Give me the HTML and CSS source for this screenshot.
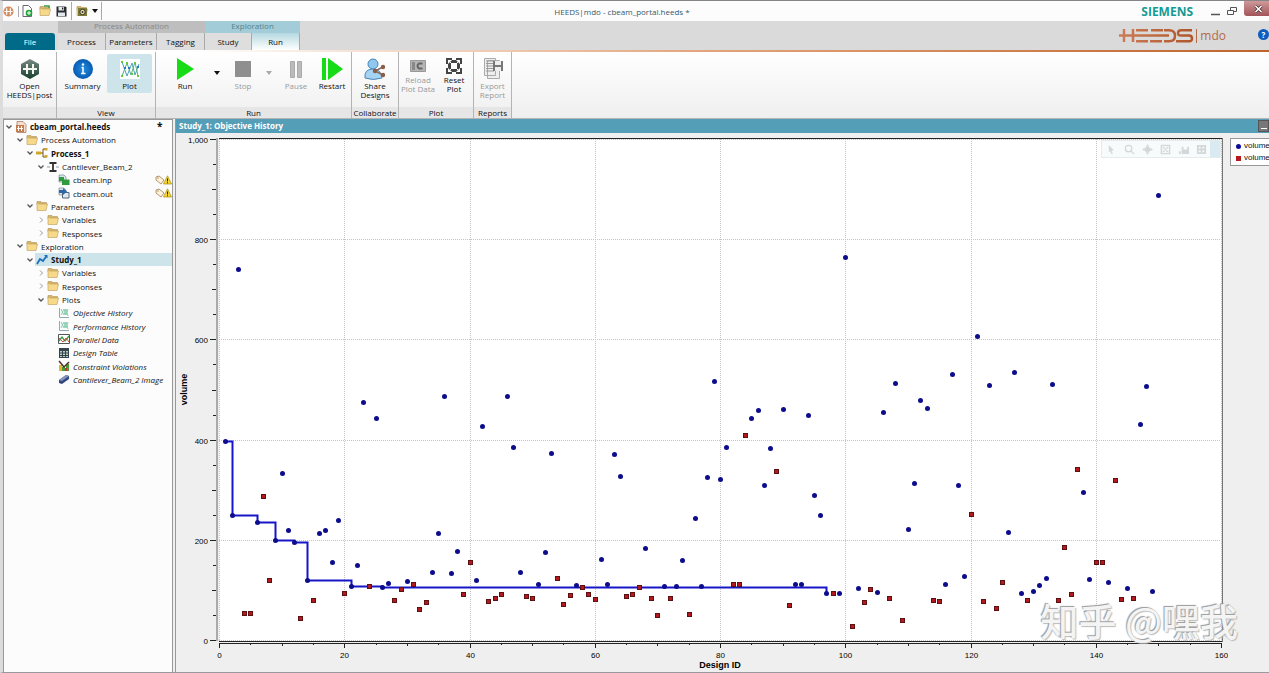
FILE: index.html
```
<!DOCTYPE html>
<html lang="en">
	<head>
		<meta charset="UTF-8">
		<title>HEEDS|mdo - cbeam_portal.heeds *</title>
		<meta name="viewport" content="width=device-width,initial-scale=1">
		<link rel="stylesheet" href="styles.css">
	</head>
	<body>
		<!-- shared icons -->
		<svg class="sprite" aria-hidden="true">
			<symbol id="i-open" viewBox="0 0 10 10"><path d="M2.500 3.500 5 6 7.500 3.500" fill="none" stroke="#555" stroke-width="1.300"/></symbol>
			<symbol id="i-closed" viewBox="0 0 10 10"><path d="M4 2.500 6.500 5 4 7.500" fill="none" stroke="#999" stroke-width="1"/></symbol>
			<symbol id="i-folder" viewBox="0 0 12 12"><path d="M1 1.500h4l1 1h4.500V5H1z" fill="#d7b468" stroke="#a98b4c" stroke-width=".5"/><path d="M1 10.500V2.500L3 4h8.500L10 10.500z" fill="#f7d98a" stroke="#b79a5a" stroke-width=".6"/></symbol>
			<symbol id="i-history" viewBox="0 0 12 12"><path d="M1.500 1v9.500H11" fill="none" stroke="#8fa9b5"/><path d="M3 2l3 6 2-6 2 7M3 8l3-6 2 6 2-6" fill="none" stroke="#6fc3a0" stroke-width=".8"/></symbol>
			<symbol id="i-tagwarn" viewBox="0 0 17 10"><path d="M1 2l3-1 5 4-3 4-5-4z" fill="#fff3de" stroke="#a07d4c" stroke-width=".8"/><circle cx="3" cy="3" r=".7" fill="#a07d4c"/><path d="M12.500.8 16.500 9h-8z" fill="#f8d92c" stroke="#a38a14" stroke-width=".7"/><path d="M12.500 3.500v3M12.500 7.300v1" stroke="#222"/></symbol>
			<symbol id="i-file" viewBox="0 0 12 12"><path d="M1 1h5l2 2v5H1z" fill="#d9e6ee" stroke="#678" stroke-width=".6"/></symbol>
		</svg>
		<div class="window">
			<header class="titlebar">
				<div class="quick">
					<span class="app-icon"><svg width="11" height="11" viewBox="0 0 12 12"><circle cx="6" cy="6" r="5.500" fill="#d58a5c"/><path d="M4 2.500v7M8 2.500v7M1.500 6h9" stroke="#fff" stroke-width="1.300"/></svg></span>
					<button class="tool" aria-label="New"><svg width="11" height="12" viewBox="0 0 11 12"><path d="M1 .5h5.500l3 3v8H1z" fill="#fff" stroke="#667"/><circle cx="7" cy="8" r="3.300" fill="#1fa33a"/><path d="M7 6v4M5 8h4" stroke="#fff"/></svg></button>
					<button class="tool" aria-label="Open"><svg width="12" height="12"><use href="#i-folder"/><path d="M5 1h5v2" fill="none" stroke="#3a9b3f" stroke-width="1.500"/></svg></button>
					<button class="tool" aria-label="Save"><svg width="11" height="11" viewBox="0 0 11 11"><path d="M.5.5h9l1 1v9H.5z" fill="#2b2b31"/><path d="M2.500 1h5.500v3.500H2.500zM2 6.500h7V10H2z" fill="#e3e8ee"/><path d="M6 1.500h1.300v2H6z" fill="#222"/></svg></button>
					<span class="sep"></span>
					<button class="tool" aria-label="Capture"><svg width="12" height="12"><use href="#i-folder"/><path d="M2 3h9v8H2z" fill="#7d7a35"/><circle cx="6.500" cy="7" r="2.700" fill="#f0e6a0" stroke="#333"/><circle cx="6.500" cy="7" r="1" fill="#333"/></svg></button>
					<button class="tool caret" aria-label="More"><svg width="6" height="4"><path d="M0 0h6L3 4z" fill="#111"/></svg></button>
					<span class="sep"></span>
				</div>
				<div class="caption">HEEDS|mdo - cbeam_portal.heeds *</div>
				<div class="win-right">
					<span class="siemens">SIEMENS</span>
					<button class="winbtn" aria-label="Minimize"><svg width="9" height="10"><path d="M0 8.500h9" stroke="#555" stroke-width="1.500"/></svg></button>
					<button class="winbtn" aria-label="Restore"><svg width="10" height="9"><path d="M3.500 3V.500h6v4H7M.5 3.500h6v4h-6z" fill="none" stroke="#555"/></svg></button>
					<button class="close" aria-label="Close"><svg width="9" height="8" viewBox="0 0 9 8"><path d="M1.500 1l6 6M7.500 1l-6 6" stroke="#433" stroke-width="3"/><path d="M1.500 1l6 6M7.500 1l-6 6" stroke="#fff" stroke-width="1.500"/></svg></button>
				</div>
			</header>

			<div class="tabstrip">
				<nav class="tabs">
					<span class="ctx ctx-process">Process Automation</span>
					<span class="ctx ctx-explore">Exploration</span>
					<button class="tab file">File</button>
					<button class="tab">Process</button>
					<button class="tab">Parameters</button>
					<button class="tab">Tagging</button>
					<button class="tab">Study</button>
					<button class="tab active">Run</button>
				</nav>
				<div class="brand">
					<svg class="heeds" width="75" height="16" viewBox="0 0 75 16" role="img" aria-label="HEEDS">
						<defs><linearGradient id="copper" gradientUnits="userSpaceOnUse" x1="0" x2="75"><stop offset="0" stop-color="#cc7d58"/><stop offset="1" stop-color="#b0552b"/></linearGradient></defs>
						<g fill="none" stroke="url(#copper)" stroke-width="2.500"><path d="M5 1v13M14 1v13M0 7.400 50 7.500M17 2.200h12M17 13.200h12M32 2.200h12M31 13.200h12M45 2.200h5q6 0 6 5.500t-6 5.500h-5M73 2.200H62q-3 0-3 2.800t3 2.500h8q3 0 3 3t-3 2.700H57"/></g>
					</svg>
					<span class="mdo">mdo</span>
					<button class="help" aria-label="Help">?</button>
				</div>
			</div>

			<div class="ribbon">
				<section class="group g-post">
					<div class="items">
						<button class="cmd"><svg width="20" height="22" viewBox="0 0 20 22"><defs><linearGradient id="hex" x2="0" y2="1"><stop offset="0" stop-color="#7b8b83"/><stop offset="1" stop-color="#173e2d"/></linearGradient></defs><path d="M10 1l9 5v10l-9 5-9-5V6z" fill="url(#hex)"/><path d="M7 6v10M13 6v10M3 11h14" stroke="#f4f7f5" stroke-width="2"/></svg>Open<br>HEEDS|post</button>
					</div>
					<h2></h2>
				</section>
				<section class="group g-view">
					<div class="items">
						<button class="cmd"><svg width="22" height="22" viewBox="0 0 22 22"><defs><radialGradient id="blue"><stop offset="0" stop-color="#238de0"/><stop offset="1" stop-color="#075bb2"/></radialGradient></defs><circle cx="11" cy="11" r="10" fill="url(#blue)"/><circle cx="11" cy="6.500" r="1.200" fill="#fff"/><path d="M9.500 9.500H11V15M9 15.500h4.500" fill="none" stroke="#fff" stroke-width="1.500"/></svg>Summary</button>
						<button class="cmd on"><svg width="22" height="22" viewBox="0 0 22 22"><path d="M1 1h20v20H1z" fill="#fff"/><path d="M3 4l5 14 5-13 3 12 4-11" fill="none" stroke="#4aa5b5"/><path d="M3 18 8 5l4 12 4-13 3 14" fill="none" stroke="#58ae82"/><path d="M2 3h2v2H2zM7 4h2v2H7zM15 4h2v2h-2zM2 17h2v2H2zM12 15h2v2h-2zM18 17h2v2h-2z" fill="#5dce35"/><path d="M5 9h2v2H5zM9 9h2v2H9zM18 8h2v2h-2z" fill="#2878c8"/></svg>Plot</button>
					</div>
					<h2>View</h2>
				</section>
				<section class="group g-run">
					<div class="items">
						<button class="cmd run"><svg width="22" height="22"><path d="M3 0 20 11 3 22z" fill="#15dc15"/></svg>Run</button>
						<button class="drop" aria-label="Run options"><svg width="6" height="4"><path d="M0 0h6L3 4z" fill="#111"/></svg></button>
						<button class="cmd stop" disabled><svg width="18" height="22"><path d="M1 3h16v16H1z" fill="#8f8f8f"/></svg>Stop</button>
						<button class="drop" aria-label="Stop options" disabled><svg width="6" height="4"><path d="M0 0h6L3 4z" fill="#aaa"/></svg></button>
						<button class="cmd pause" disabled><svg width="14" height="22"><path d="M1.500 3.500h4v16h-4zM8.500 3.500h4v16h-4z" fill="#bbb" stroke="#aaa"/></svg>Pause</button>
						<button class="cmd restart"><svg width="22" height="22"><path d="M1 0h4v22H1zM7 0 22 11 7 22z" fill="#15dc15"/></svg>Restart</button>
					</div>
					<h2>Run</h2>
				</section>
				<section class="group g-collab">
					<div class="items">
						<button class="cmd"><svg width="22" height="22" viewBox="0 0 22 22"><circle cx="9" cy="6" r="5" fill="#8fc7ee" stroke="#4b85b8"/><path d="M1 20q-1-9 8-9 8 0 9 9-9 3-17 0z" fill="#a5d3f2" stroke="#4b85b8"/><path d="M19 9 11 13l8 4" fill="none" stroke="#8a6a5d" stroke-width="1.500"/><circle cx="19" cy="9" r="2.200" fill="#8a5d4b"/><circle cx="11" cy="13" r="2.200" fill="#8a5d4b"/><circle cx="19" cy="17" r="2.200" fill="#8a5d4b"/></svg>Share<br>Designs</button>
					</div>
					<h2>Collaborate</h2>
				</section>
				<section class="group g-plot">
					<div class="items">
						<button class="cmd small" disabled><svg width="16" height="16" viewBox="0 0 16 16"><path d="M.5 2.500h15v11H.5z" fill="#b5b5b5" stroke="#999"/><path d="M2 4h3v8H2z" fill="#888"/><path d="M12.500 5.500H9q-3 2.500 0 5h3.500" fill="none" stroke="#666" stroke-width="2"/></svg>Reload<br>Plot Data</button>
						<button class="cmd small"><svg width="16" height="16" viewBox="0 0 16 16"><path d="M0 0h16v16H0z" fill="#444"/><path d="M6 0h4v2H6zM6 14h4v2H6zM0 6h2v4H0zM14 6h2v4h-2zM5 5h6v6H5z" fill="#fff"/><path d="M2 2h4L2 6zM14 2v4l-4-4zM2 14v-4l4 4zM14 14h-4l4-4z" fill="#fff"/><path d="M4 5l1-1M11 4l1 1M4 11l1 1M12 11l-1 1" stroke="#fff" stroke-width="1"/></svg>Reset<br>Plot</button>
					</div>
					<h2>Plot</h2>
				</section>
				<section class="group g-reports">
					<div class="items">
						<button class="cmd" disabled><svg width="22" height="22" viewBox="0 0 22 22"><path d="M5.500 2.500h12v18h-12zM2.500.5h11v17h-11z" fill="#eee" stroke="#aaa"/><path d="M4 3h8M4 5.500h8M4 8h8M4 10.500h8M4 13h8" stroke="#999"/><path d="M11 3h10v10H11z" fill="#777"/><path d="M13 3h6v4h-6zM13 9h6v4h-6z" fill="#eee"/></svg>Export<br>Report</button>
					</div>
					<h2>Reports</h2>
				</section>
			</div>

			<main class="work">
				<aside class="side">
					<ul class="tree" role="tree">
						<li class="l0"><svg class="chev"><use href="#i-open"/></svg><span class="node b"><svg viewBox="0 0 12 12"><path d="M2 .5h6l3 3v8H2z" fill="#f3ded0" stroke="#9a7059" stroke-width=".7"/><path d="M1 4h8v7H1z" fill="#c67b4c"/><path d="M3.500 5v5M6.500 5v5M2 7.500h6" stroke="#fff"/></svg>cbeam_portal.heeds</span><b class="dirty">*</b></li>
						<li class="l1"><svg class="chev"><use href="#i-open"/></svg><span class="node"><svg><use href="#i-folder"/></svg>Process Automation</span></li>
						<li class="l2"><svg class="chev"><use href="#i-open"/></svg><span class="node b"><svg viewBox="0 0 12 12"><path d="M0 4.500h5v3H0z" fill="#d0a528"/><path d="M5 6h2M10.500 2H7v8h3.500" fill="none" stroke="#6d5620"/><path d="M8.500 1h3v2.500h-3zM8.500 8h3v2.500h-3z" fill="#d0a528"/></svg>Process_1</span></li>
						<li class="l3"><svg class="chev"><use href="#i-open"/></svg><span class="node"><svg viewBox="0 0 12 12"><path d="M2.500 2h7M2.500 10h7M6 2v8" fill="none" stroke="#333" stroke-width="1.800"/><path d="M0 6h3M9 6h3" stroke="#999"/></svg>Cantilever_Beam_2</span></li>
						<li class="l4"><span class="node"><svg viewBox="0 0 12 12"><use href="#i-file"/><path d="M1 3h5v2.500h5.500V11H4V7H1z" fill="#2f9b3a"/></svg>cbeam.inp</span><svg class="warn"><use href="#i-tagwarn"/></svg></li>
						<li class="l4"><span class="node"><svg viewBox="0 0 12 12"><use href="#i-file"/><path d="M4.500 5.500h6.500V11H4.500z" fill="#dce9f5" stroke="#567"/><path d="M1 3h4V1l4 3.500L5 8V6H1z" fill="#2966ac"/></svg>cbeam.out</span><svg class="warn"><use href="#i-tagwarn"/></svg></li>
						<li class="l2"><svg class="chev"><use href="#i-open"/></svg><span class="node"><svg><use href="#i-folder"/></svg>Parameters</span></li>
						<li class="l3"><svg class="chev"><use href="#i-closed"/></svg><span class="node"><svg><use href="#i-folder"/></svg>Variables</span></li>
						<li class="l3"><svg class="chev"><use href="#i-closed"/></svg><span class="node"><svg><use href="#i-folder"/></svg>Responses</span></li>
						<li class="l1"><svg class="chev"><use href="#i-open"/></svg><span class="node"><svg><use href="#i-folder"/></svg>Exploration</span></li>
						<li class="l2 selected"><svg class="chev"><use href="#i-open"/></svg><span class="node b"><svg viewBox="0 0 12 12"><path d="M1 10l3-5 3 2 3.500-5" fill="none" stroke="#1b6fc0" stroke-width="1.800"/><path d="M8 1h3.500v3.500z" fill="#1b6fc0"/></svg>Study_1</span></li>
						<li class="l3"><svg class="chev"><use href="#i-closed"/></svg><span class="node"><svg><use href="#i-folder"/></svg>Variables</span></li>
						<li class="l3"><svg class="chev"><use href="#i-closed"/></svg><span class="node"><svg><use href="#i-folder"/></svg>Responses</span></li>
						<li class="l3"><svg class="chev"><use href="#i-open"/></svg><span class="node"><svg><use href="#i-folder"/></svg>Plots</span></li>
						<li class="l4"><span class="node i"><svg><use href="#i-history"/></svg>Objective History</span></li>
						<li class="l4"><span class="node i"><svg><use href="#i-history"/></svg>Performance History</span></li>
						<li class="l4"><span class="node i"><svg viewBox="0 0 12 12"><path d="M.5 1.500h11v9H.5z" fill="#fff" stroke="#555"/><path d="M1 8l3-4 3 4 4-5" fill="none" stroke="#2a9d3c" stroke-width="1.300"/><path d="M1 5l4 4 3-4 3 4" fill="none" stroke="#c8503c"/></svg>Parallel Data</span></li>
						<li class="l4"><span class="node i"><svg viewBox="0 0 12 12"><path d="M1 1h10v10H1z" fill="#35434b"/><path d="M2 4h2v1.500H2zM5 4h2v1.500H5zM8 4h2v1.500H8zM2 6.500h2V8H2zM5 6.500h2V8H5zM8 6.500h2V8H8zM2 9h2v1H2zM5 9h2v1H5zM8 9h2v1H8z" fill="#b9c9c5"/></svg>Design Table</span></li>
						<li class="l4"><span class="node i"><svg viewBox="0 0 12 12"><path d="M1 5h3v6H1z" fill="#e2b72e"/><path d="M4 7h3v4H4zM8 4h3v7H8z" fill="#4e9836"/><path d="M1 1l5 6 5-5" fill="none" stroke="#4a3426" stroke-width="1.500"/><path d="M7 8h2v3H7z" fill="#c53b2d"/></svg>Constraint Violations</span></li>
						<li class="l4"><span class="node i"><svg viewBox="0 0 12 12"><path d="M1 7l7-5 3 1v3l-7 5-3-1z" fill="#33477f"/><path d="M1 7l7-5 3 1-7 5z" fill="#8795bd"/></svg>Cantilever_Beam_2 Image</span></li>
					</ul>
				</aside>
				<section class="pane">
					<div class="pane-head"><h1>Study_1: Objective History</h1><button aria-label="Minimize plot"></button></div>
					<div class="pane-body">
						<div class="plot">
							<svg id="chart" role="img" aria-label="volume by Design ID"></svg>
							<div class="plot-tools">
								<button aria-label="Select"><svg viewBox="0 0 12 12"><path d="M3 1l6 6H6l1.500 4H6L4.500 8 3 9z"/></svg></button>
								<button aria-label="Zoom"><svg viewBox="0 0 12 12"><circle cx="5" cy="5" r="3.500" class="ln"/><path d="M7.500 7.500 11 11" class="ln"/></svg></button>
								<button aria-label="Pan"><svg viewBox="0 0 12 12"><circle cx="6" cy="6" r="3"/><path d="M6 0l2 3H4zM6 12l2-3H4zM0 6l3-2v4zM12 6 9 4v4z"/></svg></button>
								<button aria-label="Fit"><svg viewBox="0 0 12 12"><path d="M1.500 1.500h9v9h-9z" class="ln"/><path d="M3 3h2v2H3zM7 3h2v2H7zM5 5h2v2H5zM3 7h2v2H3zM7 7h2v2H7z"/></svg></button>
								<button aria-label="Save image"><svg viewBox="0 0 12 12"><path d="M1 8h2v3H1zM4 3h8v8H4zM6 3v3h4V3z" fill-rule="evenodd"/></svg></button>
								<button aria-label="Full size"><svg viewBox="0 0 12 12"><path d="M1 1h10v10H1zM3 3v2h2V3zM7 3v2h2V3zM3 7v2h2V7zM7 7v2h2V7z" fill-rule="evenodd"/></svg></button>
								<button class="lit" aria-label="Pin"></button>
							</div>
							<div class="watermark">知乎 @嘿我</div>
						</div>
						<div class="legend">
							<div><i class="dot"></i>volume</div>
							<div><i class="box"></i>volume</div>
						</div>
					</div>
				</section>
			</main>
		</div>
		<script src="chart.js"></script>
	</body>
</html>
```
FILE: styles.css
```
* {
	box-sizing: border-box;
	margin: 0;
	padding: 0;
}
html, body {
	height: 100%;
}
body {
	overflow: hidden;
	font: 8px/9px "Open Sans", "Noto Sans", sans-serif;
	color: #111;
	background: #efefef;
}
button {
	border: 0;
	background: none;
	font: inherit;
	color: inherit;
}
svg {
	display: block;
	flex: none;
}
ul {
	list-style: none;
}
.sprite {
	position: absolute;
	width: 0;
	height: 0;
}
.window {
	display: flex;
	flex-direction: column;
	height: 100vh;
	border-top: 1px solid #85858a;
	border-left: 3px solid #dcdcdc;
	border-bottom: 1px solid #9a9a9f;
}

/* title bar */
.titlebar {
	display: grid;
	grid-template-columns: 1fr auto 1fr;
	align-items: center;
	height: 20px;
	background: #fcfcfc;
}
.quick {
	display: flex;
	align-items: center;
	height: 20px;
}
.app-icon {
	padding-right: 4px;
	border-right: 1px solid #aaa;
}
.tool {
	display: flex;
	justify-content: center;
	width: 17px;
}
.tool.caret {
	width: 10px;
}
.sep {
	width: 1px;
	height: 18px;
	margin: 0 1px;
	background: #aaa;
}
.caption {
	padding-right: 28px;
	color: #34596a;
}
.win-right {
	display: flex;
	justify-content: flex-end;
	align-items: center;
	height: 20px;
}
.siemens {
	margin-right: 18px;
	font-size: 12px;
	font-weight: 700;
	color: #159a94;
}
.winbtn {
	margin-right: 7px;
}
.close {
	display: flex;
	justify-content: center;
	align-items: center;
	align-self: flex-start;
	width: 25px;
	height: 15px;
	padding-left: 3px;
	border-radius: 0 0 0 3px;
	background: linear-gradient(#cf9a9a, #a2545a);
}

/* tabs */
.tabstrip {
	display: flex;
	justify-content: space-between;
	height: 31px;
	background: linear-gradient(90deg, #fff 15%, #e3a57c 55%, #c0642c) 0 100% / 100% 2px no-repeat #dadada;
}
.tabs {
	display: grid;
	grid-template-columns: 53px 48px 51px 48px 47px 48px;
	grid-template-rows: 12px 17px;
	padding-left: 2px;
}
.ctx {
	text-align: center;
	line-height: 10px;
	color: #888;
}
.ctx-process {
	grid-column: 2 / 5;
	background: #bebebe;
}
.ctx-explore {
	grid-column: 5 / 7;
	color: #57808c;
	background: #a2cdd8;
}
.tab {
	border-right: 1px solid #aaa;
	background: #dedede;
}
.tab.file {
	margin-right: 3px;
	border: 0;
	border-radius: 3px 3px 0 0;
	color: #fff;
	background: #006b88;
}
.tab.active {
	background: linear-gradient(#b5d8e0, #fff);
}
.brand {
	display: flex;
	align-items: center;
	height: 29px;
}
.mdo {
	margin: 0 32px 0 2px;
	padding-left: 3px;
	border-left: 1px solid #b36a49;
	font-size: 12px;
	line-height: 14px;
	color: #b36a49;
}
.help {
	align-self: flex-start;
	width: 11px;
	height: 11px;
	margin-top: 8px;
	border-radius: 50%;
	font-weight: 700;
	color: #fff;
	background: #0d5dc0;
}

/* ribbon */
.ribbon {
	display: flex;
	height: 67px;
	border-bottom: 1px solid #b4b4b4;
	background: linear-gradient(#fff, #efefef);
}
.group {
	display: flex;
	flex-direction: column;
	border-right: 1px solid #b4b4b4;
}
.group h2 {
	height: 11px;
	font-size: 8px;
	font-weight: 400;
	line-height: 11px;
	text-align: center;
	white-space: nowrap;
	background: #e6e6e6;
}
.items {
	display: flex;
	flex: 1;
	justify-content: center;
	padding-top: 2px;
}
.cmd {
	display: flex;
	flex-direction: column;
	align-items: center;
	width: 45px;
	height: 39px;
	padding-top: 4px;
	border-radius: 2px;
	line-height: 9px;
	text-align: center;
	white-space: nowrap;
}
.cmd svg {
	margin-bottom: 1px;
}
.cmd.on {
	background: #cce4ea;
}
.cmd:disabled {
	color: #999;
}
.cmd.small {
	width: 36px;
}
.drop {
	display: flex;
	justify-content: center;
	width: 20px;
	padding-top: 17px;
}
.cmd.run {
	width: 44px;
}
.cmd.stop {
	width: 32px;
}
.cmd.pause {
	width: 34px;
}
.cmd.restart {
	width: 38px;
}
.g-post {
	width: 54px;
}
.g-view {
	width: 99px;
}
.g-view .items {
	gap: 2px;
}
.g-run {
	width: 196px;
}
.g-run .items {
	justify-content: flex-end;
}
.g-collab {
	width: 47px;
}
.g-plot {
	width: 75px;
}
.g-reports {
	width: 38px;
}

/* project tree */
.work {
	display: flex;
	flex: 1;
	min-height: 0;
}
.side {
	flex: none;
	width: 170px;
	border: solid #999;
	border-width: 1px 1px 0;
	background: #fcfcfc;
}
.tree {
	display: grid;
	grid-auto-rows: 1fr;
	height: 266px;
}
.tree li {
	display: flex;
	align-items: center;
	white-space: nowrap;
}
.l1 {
	padding-left: 11px;
}
.l2 {
	padding-left: 21px;
}
.l3 {
	padding-left: 32px;
}
.l4 {
	padding-left: 53px;
}
.chev {
	width: 10px;
	height: 10px;
}
.node {
	display: flex;
	flex: 1;
	align-items: center;
	align-self: stretch;
	gap: 3px;
	padding-left: 1px;
}
.node svg {
	width: 12px;
	height: 12px;
}
.b {
	font-weight: 700;
}
.i {
	font-style: italic;
}
.selected .node {
	background: #cce4ea;
}
.dirty {
	width: 15px;
	font-size: 10px;
}
.warn {
	width: 17px;
	height: 10px;
}

/* plot pane */
.pane {
	display: flex;
	flex: 1;
	flex-direction: column;
	min-width: 0;
	margin-left: 2px;
	border-left: 1px solid #999;
}
.pane-head {
	display: flex;
	align-items: center;
	justify-content: space-between;
	height: 14px;
	padding-left: 3px;
	color: #fff;
	background: #559eb7;
}
.pane-head h1 {
	font-size: 8px;
	line-height: 14px;
}
.pane-head button {
	width: 11px;
	height: 12px;
	border: 1px solid #555;
	background: linear-gradient(#fff, #fff) 2px 7px / 6px 1px no-repeat #777;
}
.pane-body {
	display: flex;
	flex: 1;
	min-height: 0;
}
.plot {
	position: relative;
	flex: 1;
	min-width: 0;
}
#chart {
	width: 100%;
	height: 100%;
	font: 8px "Liberation Sans", sans-serif;
}
#chart .frame {
	fill: #fff;
}
#chart .grid {
	stroke: #c4c4c4;
	stroke-dasharray: 1 1;
}
#chart .tick, #chart .axis {
	stroke: #222;
}
#chart .edge {
	stroke: #777;
}
#chart .rail {
	fill: #aaa;
}
#chart .title {
	font-size: 9px;
	font-weight: 700;
}
#chart .best {
	fill: none;
	stroke: #1616c8;
	stroke-width: 2;
}
#chart circle {
	fill: #0c0c8c;
}
#chart .bad {
	fill: #b3191d;
	stroke: #5c1012;
}
.plot-tools {
	position: absolute;
	top: 7px;
	right: 7px;
	display: flex;
	height: 18px;
	border: 1px solid #e4eced;
	background: #f8fbfb;
}
.plot-tools button {
	display: flex;
	align-items: center;
	justify-content: center;
	width: 18px;
}
.plot-tools svg {
	width: 11px;
	height: 11px;
	fill: #d3d9da;
}
.plot-tools .ln {
	fill: none;
	stroke: #d3d9da;
	stroke-width: 1.5;
}
.plot-tools .lit {
	width: 10px;
	background: #d9ebf1;
}
.watermark {
	position: absolute;
	right: -10px;
	bottom: 32px;
	font: 500 38px/40px "Noto Sans CJK SC", sans-serif;
	color: #f4f4f4;
	white-space: nowrap;
	text-shadow: -1px -1px 1px #999, 1px 1px 1px #bbb;
}
.legend {
	align-self: flex-start;
	flex: none;
	width: 39px;
	margin: 5px 0 0 2px;
	padding: 1px 0 1px 5px;
	border: 1px solid #999;
	border-right: 0;
	font: 8px/12px "Liberation Sans", sans-serif;
	background: #fff;
}
.legend div {
	display: flex;
	align-items: center;
	gap: 3px;
}
.dot, .box {
	flex: none;
	width: 5px;
	height: 5px;
	background: #b3191d;
}
.dot {
	border-radius: 50%;
	background: #0c0c9c;
}
```
FILE: chart.js
```
// design id : volume
var feasible = {
	1:397, 2:249, 3:741, 6:236, 9:199, 10:334, 11:219, 12:196, 14:119, 16:214, 17:220, 18:155, 19:240,
	21:107, 22:150, 23:475, 25:443, 26:106, 27:114, 30:118, 34:135, 35:213, 36:487, 37:134, 38:177,
	41:119, 42:427, 46:487, 47:386, 48:136, 51:111, 52:176, 53:374, 57:110, 61:162, 62:111, 63:371,
	64:327, 68:183, 71:107, 73:107, 74:160, 76:244, 77:107, 78:325, 79:517, 80:321, 81:385, 85:444,
	86:459, 87:310, 88:383, 90:461, 92:112, 93:112, 94:450, 95:289, 96:250, 97:93, 99:94, 100:765,
	102:103, 105:95, 106:455, 108:513, 110:222, 111:314, 112:479, 113:463, 116:111, 117:530, 118:309,
	119:128, 121:607, 123:509, 126:216, 127:534, 128:93, 130:97, 131:110, 132:123, 133:511, 138:295,
	139:122, 142:115, 145:103, 147:431, 148:507, 149:98, 150:889
};
var infeasible = {
	4:53, 5:53, 7:287, 8:120, 13:44, 15:80, 20:94, 24:108, 28:80, 29:101, 31:111, 32:62, 33:76, 39:91,
	40:155, 43:78, 44:84, 45:92, 49:87, 50:84, 54:124, 55:72, 56:90, 58:106, 59:92, 60:82, 65:87,
	66:91, 67:106, 69:84, 70:50, 72:84, 75:52, 82:112, 83:111, 84:410, 89:337, 91:70, 98:94, 101:28,
	103:76, 104:102, 107:84, 109:40, 114:80, 115:78, 120:252, 122:78, 124:64, 125:116, 129:80, 134:80,
	135:186, 136:92, 137:341, 140:155, 141:156, 143:320, 144:82, 146:84
};
var svg = document.getElementById('chart');

function add(tag, attrs, text){
	var el = document.createElementNS('http://www.w3.org/2000/svg', tag);
	for(var k in attrs) el.setAttribute(k, attrs[k]);
	if(text) el.textContent = text;
	svg.appendChild(el);
}
function line(cls, x1, y1, x2, y2){
	add('line', {'class': cls, x1: x1, y1: y1, x2: x2, y2: y2});
}

function draw(){
	var w = svg.clientWidth, h = svg.clientHeight;
	var left = 43, right = w - 7, top = 6, bottom = h - 32;
	function X(id){ return Math.round(left + id * (right - left) / 160) + .5; }
	function Y(v){ return Math.round(bottom - v * (bottom - top) / 1000) + .5; }
	svg.innerHTML = '';
	add('rect', {'class': 'frame', x: left, y: top - 1, width: right - left, height: bottom - top + 2});

	for(var v = 0; v <= 1000; v += 50){
		var len = v % 200 == 0 ? 6 : v % 100 == 0 ? 4 : 3;
		line('tick', left - 3 - len, Y(v), left - 3, Y(v));
		if(v % 200 == 0){
			line('grid', left, Y(v), right, Y(v));
			add('text', {x: left - 11, y: Y(v) + 3, 'text-anchor': 'end'}, v.toLocaleString('en-US'));
		}
	}
	for(var d = 0; d <= 160; d += 5){
		line('tick', X(d), bottom + 3, X(d), bottom + (d % 20 == 0 ? 8 : d % 10 == 0 ? 6 : 5));
		if(d % 20 == 0){
			line('grid', X(d), top, X(d), bottom);
			add('text', {x: X(d), y: bottom + 18, 'text-anchor': 'middle'}, String(d));
		}
	}
	add('rect', {'class': 'rail', x: left - 3, y: top - 1, width: 2, height: bottom - top + 2});
	line('axis', left, top - .5, right + 1, top - .5);
	line('axis', left, bottom + 1.5, right + 1, bottom + 1.5);
	line('axis', left, bottom + 3.5, right + 1, bottom + 3.5);
	line('edge', right + 1.5, top - 1, right + 1.5, bottom + 2);

	// best design so far
	var best = Infinity, path = '';
	for(var id in feasible){
		if(feasible[id] >= best) continue;
		best = feasible[id];
		path += path ? 'H' + X(id) + 'V' + Y(best) : 'M' + X(id) + ' ' + Y(best);
	}
	add('path', {'class': 'best', d: path});
	for(var f in feasible) add('circle', {cx: X(f), cy: Y(feasible[f]), r: 2.5});
	for(var n in infeasible) add('rect', {'class': 'bad', x: X(n) - 2, y: Y(infeasible[n]) - 2, width: 4, height: 4});

	add('text', {'class': 'title', x: (left + right) / 2, y: bottom + 28, 'text-anchor': 'middle'}, 'Design ID');
	add('text', {'class': 'title', transform: 'translate(11 ' + (top + bottom) / 2 + ') rotate(-90)', 'text-anchor': 'middle'}, 'volume');
}
window.onresize = draw;
draw();
```
